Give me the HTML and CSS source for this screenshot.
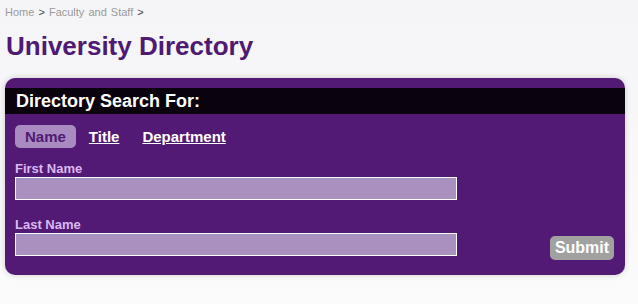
FILE: index.html
```html
<!DOCTYPE html>
<html>
<head>
<meta charset="utf-8">
<link rel="stylesheet" href="styles.css">
</head>
<body>
<div class="page">
  <div class="crumbs"><a class="crumb" href="#">Home</a> <span class="sep">&gt;</span> <a class="crumb" href="#">Faculty and Staff</a> <span class="sep">&gt;</span></div>
  <h1 class="title">University Directory</h1>
  <div class="panel">
    <div class="panel-head">Directory Search For:</div>
    <div class="tabs">
      <a class="tab active" href="#">Name</a>
      <a class="tab" href="#">Title</a>
      <a class="tab" href="#">Department</a>
    </div>
    <form class="form">
      <label class="label first">First Name</label>
      <input class="field" type="text">
      <div class="last-row">
        <div class="last-col">
          <label class="label second">Last Name</label>
          <input class="field" type="text">
        </div>
        <button class="submit" type="button">Submit</button>
      </div>
    </form>
  </div>
</div>
</body>
</html>
```
FILE: styles.css
```css
html, body {
  margin: 0;
  padding: 0;
}
body {
  background: linear-gradient(#f5f5f7, #fbfbfc);
  font-family: "Liberation Sans", Arial, sans-serif;
  width: 638px;
  height: 304px;
  overflow: hidden;
}
.page {
  padding: 0 13px 0 5px;
}
.crumbs {
  font-size: 11px;
  line-height: 13px;
  padding-top: 6px;
  color: #999;
  word-spacing: 1px;
}
.crumb {
  color: #999;
  text-decoration: none;
}
.sep {
  color: #444;
}
.title {
  margin: 12px 0 0 1px;
  font-size: 26px;
  line-height: 30px;
  font-weight: bold;
  color: #4e1a74;
}
.panel {
  margin-top: 17px;
  background: #521a74;
  border-radius: 10px;
  padding-top: 10px;
  padding-bottom: 19px;
  box-shadow: 0 0 6px rgba(0, 0, 0, 0.18);
}
.panel-head {
  background: #0a030e;
  color: #fff;
  font-size: 18px;
  font-weight: bold;
  height: 26px;
  line-height: 26px;
  padding-left: 11px;
}
.tabs {
  display: flex;
  gap: 3px;
  margin-top: 11px;
  padding-left: 10px;
}
.tab {
  display: block;
  font-size: 15px;
  font-weight: bold;
  line-height: 23px;
  height: 23px;
  padding: 0 10px;
  color: #fff;
  text-decoration: underline;
  border-radius: 5px;
}
.tab.active {
  background: #a98bc1;
  color: #4e1a74;
  text-decoration: none;
}
.form {
  margin: 0;
  padding: 0 11px 0 10px;
}
.label {
  display: block;
  font-size: 13px;
  font-weight: bold;
  line-height: 15px;
  color: #dcb8f2;
}
.label.first {
  margin-top: 13px;
  margin-bottom: 1px;
}
.label.second {
  margin-top: 17px;
  margin-bottom: 1px;
}
.field {
  display: block;
  box-sizing: border-box;
  width: 442px;
  height: 23px;
  margin: 0;
  padding: 0 4px;
  border: 1px solid #fff;
  background: #a990bf;
  font-family: "Liberation Sans", Arial, sans-serif;
}
.last-row {
  display: flex;
  justify-content: space-between;
  align-items: flex-end;
}
.submit {
  box-sizing: border-box;
  width: 64px;
  height: 24px;
  margin: 0 0 -4px 0;
  padding: 0;
  border: none;
  border-radius: 5px;
  background: #a1a1a1;
  color: #fff;
  font-family: "Liberation Sans", Arial, sans-serif;
  font-size: 16px;
  font-weight: bold;
  line-height: 24px;
}
```
